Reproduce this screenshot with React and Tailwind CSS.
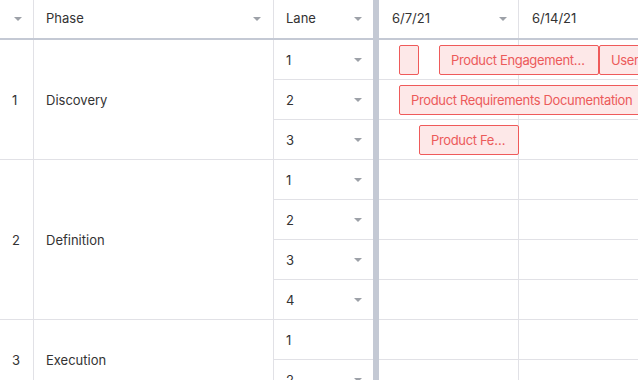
import React from "react";

const phases = [
  { id: 1, name: "Discovery", lanes: [{ n: 1, caret: true }, { n: 2, caret: true }, { n: 3, caret: true }] },
  { id: 2, name: "Definition", lanes: [{ n: 1, caret: true }, { n: 2, caret: true }, { n: 3, caret: true }, { n: 4, caret: true }] },
  { id: 3, name: "Execution", lanes: [{ n: 1, caret: false }, { n: 2, caret: true }] },
];

// bars per timeline row, start/length in days (20px per day)
const bars = {
  0: [
    { start: 1, days: 1, label: "" },
    { start: 3, days: 8, label: "Product Engagement Survey" },
    { start: 11, days: 6, label: "User Interviews" },
  ],
  1: [{ start: 1, days: 14, label: "Product Requirements Documentation" }],
  2: [{ start: 2, days: 5, label: "Product Feature Prioritization" }],
};

const DAY = 20;

function Caret() {
  return (
    <svg width="8" height="4" viewBox="0 0 8 4" className="shrink-0">
      <path d="M0 0h8L4 4z" fill="#9da1a8" />
    </svg>
  );
}

export default function App() {
  const totalRows = phases.reduce((s, p) => s + p.lanes.length, 0);

  return (
    <div
      className="h-[380px] w-[638px] overflow-hidden bg-white text-[13px] text-[#333333]"
      style={{ fontFamily: "Inter, 'Noto Sans', sans-serif" }}
    >
      <div className="flex">
        {/* Grid side */}
        <div className="w-[373px] shrink-0">
          {/* Header */}
          <div className="flex h-[40px] border-b-2 border-[#c4c9d4]">
            <div className="flex w-[34px] items-center justify-end border-r border-[#e1e1e6] pr-[11px]">
              <Caret />
            </div>
            <div className="flex w-[240px] items-center justify-between border-r border-[#e1e1e6] pl-[12px] pr-[12px]">
              <span>Phase</span>
              <Caret />
            </div>
            <div className="flex w-[99px] items-center justify-between pl-[12px] pr-[11px]">
              <span>Lane</span>
              <Caret />
            </div>
          </div>

          {/* Rows */}
          {phases.map((p) => (
            <div key={p.id} className="flex border-b border-[#e1e1e6]">
              <div className="flex w-[34px] items-center border-r border-[#e1e1e6] pl-[12px] pt-[2px]">{p.id}</div>
              <div className="flex w-[240px] items-center border-r border-[#e1e1e6] pl-[12px] pt-[2px]">{p.name}</div>
              <div className="w-[99px]">
                {p.lanes.map((l, i) => (
                  <div
                    key={l.n}
                    className={`flex items-center justify-between pl-[12px] pr-[11px] ${
                      i < p.lanes.length - 1 ? "h-[40px] border-b border-[#e1e1e6]" : "h-[39px]"
                    }`}
                  >
                    <span className="pt-[2px]">{l.n}</span>
                    {l.caret && <Caret />}
                  </div>
                ))}
              </div>
            </div>
          ))}
        </div>

        {/* Splitter */}
        <div className="w-[6px] shrink-0 bg-[#c4c9d4]" />

        {/* Timeline side */}
        <div className="min-w-0 flex-1 overflow-hidden">
          <div className="flex h-[40px] border-b-2 border-[#c4c9d4]">
            <div className="flex w-[140px] shrink-0 items-center justify-between border-r border-[#e1e1e6] pl-[13px] pr-[11px]">
              <span>6/7/21</span>
              <Caret />
            </div>
            <div className="flex w-[140px] shrink-0 items-center justify-between pl-[13px] pr-[11px]">
              <span>6/14/21</span>
              <Caret />
            </div>
          </div>

          {Array.from({ length: totalRows }).map((_, r) => (
            <div key={r} className="relative flex h-[40px] border-b border-[#e1e1e6]">
              <div className="w-[140px] shrink-0 border-r border-[#e1e1e6]" />
              <div className="w-[140px] shrink-0" />
              {(bars[r] || []).map((b, i) => (
                <div
                  key={i}
                  className="absolute top-[5px] flex h-[30px] items-center overflow-hidden rounded-[2px] border border-[#ef5a5a] bg-[#fde8e8] text-[#ec5a5a]"
                  style={{ left: b.start * DAY, width: b.days * DAY }}
                >
                  {b.label && (
                    <span className="min-w-0 truncate whitespace-nowrap px-[11px] pt-[2px] tracking-[-0.35px]">
                      {b.label}
                    </span>
                  )}
                </div>
              ))}
            </div>
          ))}
        </div>
      </div>
    </div>
  );
}
